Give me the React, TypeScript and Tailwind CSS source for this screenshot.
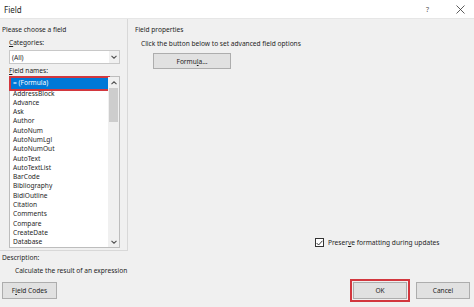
import { ReactNode } from 'react'

const fields = [
  'AddressBlock',
  'Advance',
  'Ask',
  'Author',
  'AutoNum',
  'AutoNumLgl',
  'AutoNumOut',
  'AutoText',
  'AutoTextList',
  'BarCode',
  'Bibliography',
  'BidiOutline',
  'Citation',
  'Comments',
  'Compare',
  'CreateDate',
  'Database',
]

function Chevron({ up = false }: { up?: boolean }) {
  return (
    <svg width="6" height="4" viewBox="0 0 6 4" className={up ? 'rotate-180' : ''}>
      <path d="M0.5 0.8 L3 3.2 L5.5 0.8" fill="none" stroke="#505050" strokeWidth="1.1" />
    </svg>
  )
}

function Button({ children, className = '' }: { children: ReactNode; className?: string }) {
  return (
    <div
      className={`flex items-center justify-center border border-[#adadad] bg-[#e1e1e1] text-[#1e1e1e] ${className}`}
    >
      {children}
    </div>
  )
}

export default function App() {
  return (
    <div className="relative h-[307px] w-[474px] overflow-hidden bg-[#f0f0f0] font-['Segoe_UI','Noto_Sans',sans-serif] text-[6.6px] leading-[11px] text-[#1e1e1e]">
      {/* title bar */}
      <div className="flex h-[18px] items-center bg-white pl-[4px] pr-[9px] text-[8px]">
        <span>Field</span>
        <span className="ml-auto mr-[27px] text-[7px] text-[#555]">?</span>
        <svg width="9" height="9" viewBox="0 0 9 9">
          <path d="M0.5 0.5 L8.5 8.5 M8.5 0.5 L0.5 8.5" stroke="#333" strokeWidth="0.8" />
        </svg>
      </div>

      <div className="flex h-[233px] border-t border-[#e6e6e6]">
        {/* left group */}
        <div className="w-[128px] border-b border-r border-[#d8d8d8] pl-[2px] pt-[5px]">
          <p>Please choose a field</p>
          <div className="pl-[7px] pr-[7px]">
            <p className="mt-[2px]">
              <u>C</u>ategories:
            </p>
            <div className="mt-[2px] flex h-[14px] items-center border border-[#c8c8c8] bg-white pl-[2px]">
              <span>(All)</span>
              <div className="ml-auto flex h-full w-[10px] items-center justify-center bg-[#f0f0f0]">
                <Chevron />
              </div>
            </div>
            <p className="mt-[1px]">
              <u>F</u>ield names:
            </p>
            <div className="flex h-[172px] border border-[#bdbdbd] bg-white">
              <div className="flex-1 pl-[1px] pt-[1px] leading-[9.3px]">
                <div className="h-[10.5px] bg-[#0078d7] pl-[2px] leading-[10.5px] text-white outline-2 outline-[#d2373e]">
                  = (Formula)
                </div>
                {fields.map((f) => (
                  <div key={f} className="pl-[2px]">
                    {f}
                  </div>
                ))}
              </div>
              <div className="flex w-[11px] flex-col bg-[#f0f0f0]">
                <div className="flex h-[11px] items-center justify-center">
                  <Chevron up />
                </div>
                <div className="mx-[1px] h-[34px] bg-[#cdcdcd]" />
                <div className="flex-1" />
                <div className="flex h-[11px] items-center justify-center">
                  <Chevron />
                </div>
              </div>
            </div>
          </div>
        </div>

        {/* right group */}
        <div className="flex flex-1 flex-col pl-[7px] pt-[5px]">
          <p>Field properties</p>
          <p className="mt-[3px] pl-[6px]">Click the button below to set advanced field options</p>
          <Button className="ml-[18px] mt-[4px] h-[16px] w-[78px]">
            <span>
              Formu<u>l</u>a...
            </span>
          </Button>
          <div className="mt-auto mb-[3px] ml-[180px] flex items-center gap-[4px]">
            <div className="flex h-[9px] w-[9px] items-center justify-center border border-[#333] bg-white">
              <svg width="7" height="6" viewBox="0 0 7 6">
                <path d="M0.6 3 L2.6 5 L6.4 0.8" fill="none" stroke="#222" strokeWidth="0.9" />
              </svg>
            </div>
            <span>
              Preser<u>v</u>e formatting during updates
            </span>
          </div>
        </div>
      </div>

      {/* bottom */}
      <div className="pl-[2px] pt-[1px]">
        <p>Description:</p>
        <p className="mt-[2px] pl-[13px]">Calculate the result of an expression</p>
        <div className="mt-[5px] flex items-center pr-[4px]">
          <Button className="h-[17px] w-[55px]">
            <span>
              F<u>i</u>eld Codes
            </span>
          </Button>
          <div className="ml-auto flex items-center gap-[8px]">
            <div className="p-[1px] outline-2 outline-[#d2373e]">
              <Button className="h-[17px] w-[54px] border-[#0078d7]">OK</Button>
            </div>
            <Button className="h-[17px] w-[54px]">Cancel</Button>
          </div>
        </div>
      </div>
    </div>
  )
}
